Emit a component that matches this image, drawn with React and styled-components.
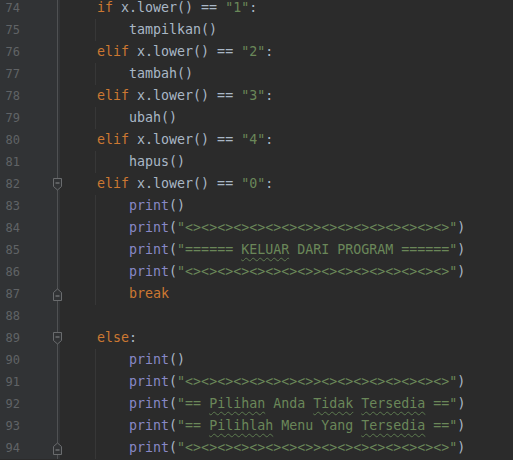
import React from "react";
import styled, { createGlobalStyle } from "styled-components";

const Global = createGlobalStyle`
  html, body { margin: 0; padding: 0; background: #2b2b2b; overflow: hidden; }
  #root { width: 513px; height: 460px; overflow: hidden; }
`;

const Editor = styled.div`
  display: flex;
  flex-direction: column;
  margin-top: -3px;
  width: 513px;
  font-family: "DejaVu Sans Mono", "Liberation Mono", monospace;
`;

const Line = styled.div`
  display: grid;
  grid-template-columns: 60px 1fr;
  height: 22px;
`;

const Gutter = styled.div`
  display: grid;
  grid-template-columns: 20px 33px 10px;
  align-items: center;
  background: #313335;
  width: 60px;
  height: 22px;
`;

const Num = styled.span`
  text-align: right;
  font-size: 12px;
  color: #606366;
  line-height: 22px;
`;

const Fold = styled.span`
  height: 22px;
  display: flex;
  align-items: center;
  justify-content: center;
  background: linear-gradient(to right, transparent 4px, #4f5153 4px, #4f5153 5px, transparent 5px);
`;

const Code = styled.div`
  position: relative;
  padding-left: 5px;
  font-size: 13.3px;
  line-height: 22px;
  white-space: pre;
  color: #a9b7c6;
  display: flex;
  align-items: center;
`;

const Guide = styled.span`
  position: absolute;
  left: 35px;
  top: 0;
  bottom: 0;
  width: 1px;
  background: #373737;
`;

const Kw = styled.span`color: #cc7832;`;
const Str = styled.span`color: #6a8759;`;
const Bi = styled.span`color: #8888c6;`;
const Typo = styled.span`
  text-decoration: underline wavy #5d7a4f;
  text-decoration-thickness: 1px;
  text-underline-offset: 3px;
`;

const FoldMarker = ({ end }) => (
  <svg width="10" height="13" viewBox="0 0 10 13" style={end ? { transform: "scaleY(-1)" } : undefined}>
    <path d="M0.5 0.5 H8.5 V8.5 L4.5 12 L0.5 8.5 Z" fill="#313335" stroke="#6a6c6e" strokeWidth="1" />
    <path d="M2.5 5 H6.5" stroke="#8a8c8e" strokeWidth="1" />
  </svg>
);

const I4 = "    ";
const I8 = "        ";
const ARROWS = "<><><><><><><><>><><><><><><><><>";

const printStr = (content) => (
  <>
    {I8}<Bi>print</Bi>(<Str>"{content}"</Str>)
  </>
);

const cond = (kw, n) => (
  <>
    {I4}<Kw>{kw}</Kw> x.lower() == <Str>"{n}"</Str>:
  </>
);

const lines = [
  { n: 74, c: cond("if", "1") },
  { n: 75, g: 1, c: <>{I8}tampilkan()</> },
  { n: 76, c: cond("elif", "2") },
  { n: 77, g: 1, c: <>{I8}tambah()</> },
  { n: 78, c: cond("elif", "3") },
  { n: 79, g: 1, c: <>{I8}ubah()</> },
  { n: 80, c: cond("elif", "4") },
  { n: 81, g: 1, c: <>{I8}hapus()</> },
  { n: 82, f: "start", c: cond("elif", "0") },
  { n: 83, g: 1, c: <>{I8}<Bi>print</Bi>()</> },
  { n: 84, g: 1, c: printStr(ARROWS) },
  { n: 85, g: 1, c: printStr(<>====== <Typo>KELUAR</Typo> DARI PROGRAM ======</>) },
  { n: 86, g: 1, c: printStr(ARROWS) },
  { n: 87, g: 1, f: "end", c: <>{I8}<Kw>break</Kw></> },
  { n: 88, c: null },
  { n: 89, f: "start", c: <>{I4}<Kw>else</Kw>:</> },
  { n: 90, g: 1, c: <>{I8}<Bi>print</Bi>()</> },
  { n: 91, g: 1, c: printStr(ARROWS) },
  { n: 92, g: 1, c: printStr(<>== <Typo>Pilihan</Typo> Anda <Typo>Tidak</Typo> <Typo>Tersedia</Typo> ==</>) },
  { n: 93, g: 1, c: printStr(<>== <Typo>Pilihlah</Typo> Menu Yang <Typo>Tersedia</Typo> ==</>) },
  { n: 94, g: 1, f: "end", c: printStr(ARROWS) },
];

export default function App() {
  return (
    <>
      <Global />
      <Editor>
        {lines.map((l) => (
          <Line key={l.n}>
            <Gutter>
              <Num>{l.n}</Num>
              <span />
              <Fold>{l.f && <FoldMarker end={l.f === "end"} />}</Fold>
            </Gutter>
            <Code>
              {l.g && <Guide />}
              <span>{l.c}</span>
            </Code>
          </Line>
        ))}
      </Editor>
    </>
  );
}
